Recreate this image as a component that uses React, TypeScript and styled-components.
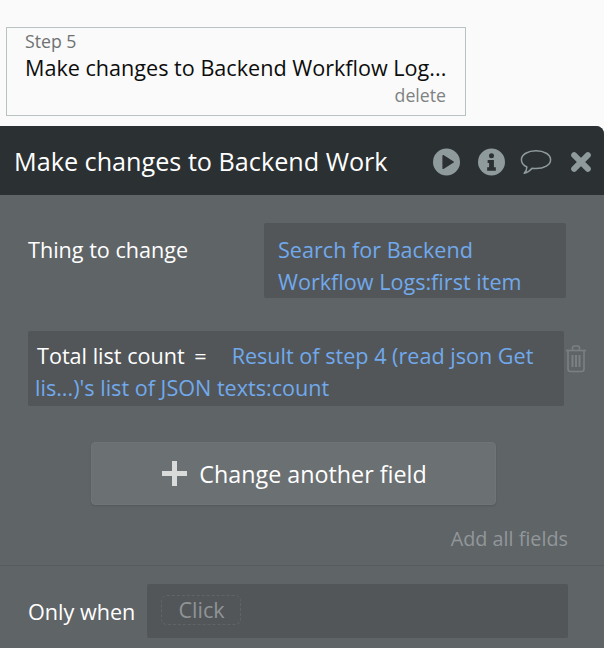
import styled, { createGlobalStyle } from "styled-components";

const GlobalStyle = createGlobalStyle`
    html, body {
        margin : 0;
        padding : 0;
        height : 648px;
        overflow : hidden;
        background-color : #fafafa;
        font-family : 'Open Sans', sans-serif;
    }
`

const StepCard = styled.div`
    box-sizing : border-box;
    width : 460px;
    height : 89px;
    margin : 27px 0 0 6px;
    padding : 2px 19px 0 18px;
    border : 1px solid #b8c2c2;
    display : flex;
    flex-direction : column;

    & .step-label{
        font-size : 17.7px;
        line-height : 22px;
        color : #6f7272;
    }
    & .step-name{
        font-size : 21.6px;
        line-height : 31px;
        color : #0d0d0d;
        white-space : nowrap;
    }
    & .step-delete{
        font-size : 17.7px;
        line-height : 25px;
        color : #7f8282;
        text-align : right;
    }
`

const Panel = styled.div`
    margin-top : 10px;
    height : 522px;
    background-color : #5f6467;
    border-radius : 0 8px 0 0;
    overflow : hidden;
`

const Header = styled.div`
    box-sizing : border-box;
    height : 69px;
    padding : 0 12px 0 14px;
    background-color : #2b3033;
    display : flex;
    flex-direction : row;
    align-items : center;
    justify-content : space-between;

    & .title{
        font-size : 25.2px;
        color : #fff;
        white-space : nowrap;
    }
    & .icons{
        display : flex;
        flex-direction : row;
        align-items : center;
        gap : 18px;
        margin-top : 2px;

        & svg:nth-child(3){
            margin-left : -3px;
        }
    }
`

const Body = styled.div`
    display : flex;
    flex-direction : column;
    padding-top : 28px;
`

const Label = styled.span`
    font-size : 21.6px;
    line-height : 32px;
    color : #fff;
    white-space : nowrap;
`

const Dynamic = styled.span`
    font-size : 21.6px;
    color : #71a9ec;
`

const ThingRow = styled.div`
    display : flex;
    flex-direction : row;
    padding : 0 38px 0 28px;
    justify-content : space-between;
    align-items : flex-start;

    & ${Label}{
        margin-top : 11px;
    }
`

const ThingValue = styled.div`
    box-sizing : border-box;
    width : 302px;
    height : 75px;
    padding : 11px 14px 0;
    background-color : #525659;
    border-radius : 2px;
    font-size : 21.6px;
    line-height : 32px;
    color : #71a9ec;
`

const FieldRow = styled.div`
    display : flex;
    flex-direction : row;
    align-items : flex-start;
    margin : 33px 0 0 28px;
`

const FieldBox = styled.div`
    box-sizing : border-box;
    width : 536px;
    height : 75px;
    padding : 9px 8px 0 7px;
    background-color : #525659;
    border-radius : 2px;
    font-size : 21.6px;
    line-height : 32px;
    color : #fff;

    & .field-name{
        margin-left : 2px;
    }
    & .equals{
        margin : 0 25px 0 4px;
    }
`

const TrashButton = styled.div`
    margin : 14px 0 0 1px;
    height : 28px;
`

const AddButton = styled.div`
    box-sizing : border-box;
    align-self : flex-start;
    width : 405px;
    height : 63px;
    margin : 36px 0 0 91px;
    padding-left : 2px;
    background-color : #6b7073;
    border : 1px solid #6f7477;
    border-radius : 4px;
    box-shadow : 0 1px 2px rgba(0, 0, 0, 0.12);
    display : flex;
    flex-direction : row;
    align-items : center;
    justify-content : center;
    gap : 12px;
    color : #fff;

    & span{
        font-size : 23.3px;
    }
`

const AddAll = styled.div`
    padding : 20px 36px 0 0;
    text-align : right;
    font-size : 19.8px;
    line-height : 27px;
    color : #92979a;
`

const OnlyWhenRow = styled.div`
    margin-top : 13px;
    padding : 18px 36px 0 28px;
    border-top : 1px solid #585c5f;
    display : flex;
    flex-direction : row;
    align-items : flex-start;
    justify-content : space-between;

    & ${Label}{
        margin-top : 12px;
    }
`

const ConditionBox = styled.div`
    box-sizing : border-box;
    width : 421px;
    height : 54px;
    padding : 11px 0 0 14px;
    background-color : #525659;
    border-radius : 2px;
`

const ClickPill = styled.div`
    box-sizing : border-box;
    width : 80px;
    height : 30px;
    padding-left : 1px;
    border : 1px dashed #606467;
    border-radius : 6px;
    font-size : 21.6px;
    line-height : 27px;
    color : #8f9497;
    text-align : center;
`

const PlayIcon = () => (
    <svg width="27" height="28" viewBox="0 0 28 28">
        <circle cx="14" cy="14" r="14" fill="#8f9a9d" />
        <path d="M10.5 7.5 L21 14 L10.5 20.5 Z" fill="#2b3033" stroke="#2b3033" strokeWidth="1.5" strokeLinejoin="round" />
    </svg>
)

const InfoIcon = () => (
    <svg width="27" height="28" viewBox="0 0 28 28">
        <circle cx="14" cy="14" r="14" fill="#8f9a9d" />
        <circle cx="14" cy="7.5" r="2.6" fill="#2b3033" />
        <path d="M10 12 H16.5 V19.5 H18.5 V23 H9.5 V19.5 H11.5 V15 H10 Z" fill="#2b3033" />
    </svg>
)

const ChatIcon = () => (
    <svg width="32" height="28" viewBox="0 0 34 28">
        <path
            d="M17 2 C25.5 2 32.5 6 32.5 11.5 C32.5 17 25.5 21 17 21 C15.5 21 14.2 20.9 12.8 20.6 C11 23 8.5 25 4.5 26 C6.4 24 7.3 22 7.3 19.3 C3.6 17.5 1.5 14.7 1.5 11.5 C1.5 6 8.5 2 17 2 Z"
            fill="none"
            stroke="#8f9a9d"
            strokeWidth="1.6"
            strokeLinejoin="round"
        />
    </svg>
)

const CloseIcon = () => (
    <svg width="22" height="22" viewBox="0 0 24 24">
        <path d="M4.5 4.5 L19.5 19.5 M19.5 4.5 L4.5 19.5" stroke="#8f9a9d" strokeWidth="6.4" strokeLinecap="round" />
    </svg>
)

const TrashIcon = () => (
    <svg width="22" height="28" viewBox="0 0 22 28" fill="none" stroke="#7b8083" strokeWidth="1.6">
        <path d="M1 5.5 H21" />
        <path d="M7.5 5 V3 C7.5 1.8 8.2 1 9.5 1 H12.5 C13.8 1 14.5 1.8 14.5 3 V5" />
        <path d="M3 5.5 V24 C3 25.6 3.9 26.5 5.5 26.5 H16.5 C18.1 26.5 19 25.6 19 24 V5.5" />
        <path d="M7.5 10 V22 M11 10 V22 M14.5 10 V22" strokeWidth="2" />
    </svg>
)

const PlusIcon = () => (
    <svg width="25" height="25" viewBox="0 0 25 25">
        <path d="M10 0 H15 V10 H25 V15 H15 V25 H10 V15 H0 V10 H10 Z" fill="#d9dbdb" />
    </svg>
)

const App = () => {
    return (
        <>
            <GlobalStyle />
            <StepCard>
                <div className="step-label">Step 5</div>
                <div className="step-name">Make changes to Backend Workflow Log...</div>
                <div className="step-delete">delete</div>
            </StepCard>
            <Panel>
                <Header>
                    <div className="title">Make changes to Backend Work</div>
                    <div className="icons">
                        <PlayIcon />
                        <InfoIcon />
                        <ChatIcon />
                        <CloseIcon />
                    </div>
                </Header>
                <Body>
                    <ThingRow>
                        <Label>Thing to change</Label>
                        <ThingValue>Search for Backend Workflow Logs:first item</ThingValue>
                    </ThingRow>
                    <FieldRow>
                        <FieldBox>
                            <span className="field-name">Total list count</span> <span className="equals">=</span>
                            <Dynamic>Result of step 4 (read json Get lis...)'s list of JSON texts:count</Dynamic>
                        </FieldBox>
                        <TrashButton><TrashIcon /></TrashButton>
                    </FieldRow>
                    <AddButton>
                        <PlusIcon />
                        <span>Change another field</span>
                    </AddButton>
                    <AddAll>Add all fields</AddAll>
                    <OnlyWhenRow>
                        <Label>Only when</Label>
                        <ConditionBox>
                            <ClickPill>Click</ClickPill>
                        </ConditionBox>
                    </OnlyWhenRow>
                </Body>
            </Panel>
        </>
    )
}

export default App;
